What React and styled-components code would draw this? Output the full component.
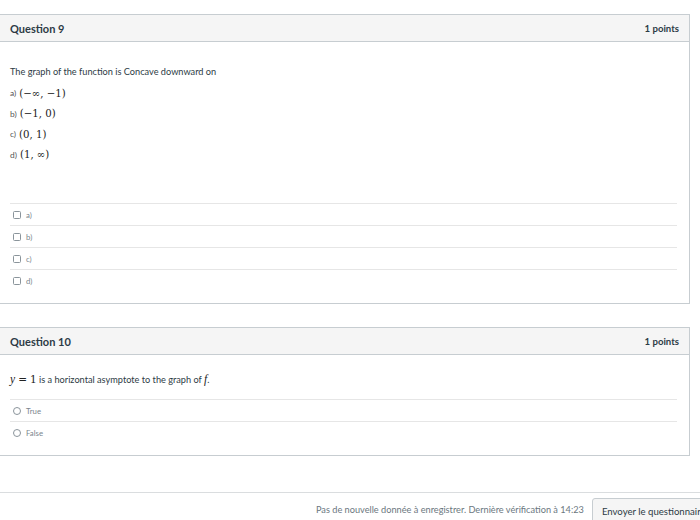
import React from "react";
import styled, { createGlobalStyle } from "styled-components";

const GlobalStyle = createGlobalStyle`
  html, body {
    margin: 0;
    padding: 0;
    background: #ffffff;
    overflow: hidden;
  }
  body {
    font-family: Lato, "Open Sans", "Liberation Sans", sans-serif;
    color: #2d3b45;
  }
`;

const St = {
  Page: styled.div`
    width: 700px;
    height: 520px;
    padding-top: 14px;
    box-sizing: border-box;
    overflow: hidden;
  `,

  Card: styled.div`
    width: 690px;
    box-sizing: border-box;
    border: 1px solid #c7cdd1;
    border-left: none;
    margin-bottom: ${({ mb }) => mb || "0"};
    background: #ffffff;
  `,

  Header: styled.div`
    display: flex;
    align-items: center;
    justify-content: space-between;
    height: 26px;
    padding: 0 10px;
    background: #f5f5f5;
    border-bottom: 1px solid #c7cdd1;
  `,

  Title: styled.span`
    font-size: 11px;
    font-weight: 700;
    color: #2d3b45;
  `,

  Points: styled.span`
    font-size: 9.6px;
    font-weight: 700;
    color: #2d3b45;
  `,

  Body: styled.div`
    padding: ${({ pt }) => pt} 12px ${({ pb }) => pb} 10px;
  `,

  Text: styled.p`
    margin: 0 0 ${({ mb }) => mb || "0"};
    font-size: 9.2px;
    line-height: 14px;
    color: #2d3b45;
  `,

  Option: styled.div`
    display: flex;
    align-items: center;
    gap: 3px;
    height: 20.5px;
  `,

  OptionLabel: styled.span`
    font-size: 8.4px;
    color: #555;
  `,

  Math: styled.span`
    font-family: "DejaVu Serif", "Liberation Serif", serif;
    font-size: ${({ size }) => size || "11px"};
    color: #222;
    white-space: nowrap;
  `,

  Var: styled.i`
    font-family: "Liberation Serif", "DejaVu Serif", serif;
    font-style: italic;
    font-size: 1.1em;
  `,

  Rel: styled.span`
    margin: 0 3px;
  `,

  Answers: styled.div`
    margin-top: ${({ mt }) => mt};
  `,

  Answer: styled.label`
    display: flex;
    align-items: center;
    gap: 5px;
    height: 21px;
    padding-left: 3px;
    border-top: 1px solid #e6e6e6;
  `,

  Box: styled.span`
    display: inline-block;
    width: 6px;
    height: 6px;
    border: 1px solid #8a949b;
    border-radius: ${({ round }) => (round ? "50%" : "1.5px")};
  `,

  AnswerText: styled.span`
    font-size: 7.8px;
    color: #7b868d;
  `,

  Footer: styled.div`
    display: flex;
    align-items: flex-start;
    gap: 8px;
    margin-top: 36px;
    padding: 5px 0 0 316px;
    border-top: 1px solid #dadddf;
    white-space: nowrap;
  `,

  Status: styled.span`
    margin-top: 6px;
    font-size: 9.2px;
    color: #6b7780;
  `,

  SubmitButton: styled.button`
    flex-shrink: 0;
    height: 26px;
    padding: 0 9px;
    background: #f5f5f5;
    border: 1px solid #c7cdd1;
    border-radius: 3px;
    font-family: Lato, "Open Sans", sans-serif;
    font-size: 9.6px;
    color: #2d3b45;
  `,
};

const choices = [
  { key: "a)", math: "(−∞, −1)" },
  { key: "b)", math: "(−1, 0)" },
  { key: "c)", math: "(0, 1)" },
  { key: "d)", math: "(1, ∞)" },
];

const App = () => (
  <St.Page>
    <GlobalStyle />
    <St.Card mb="23px">
      <St.Header>
        <St.Title>Question 9</St.Title>
        <St.Points>1 points</St.Points>
      </St.Header>
      <St.Body pt="23px" pb="12px">
        <St.Text mb="4px">The graph of the function is Concave downward on</St.Text>
        {choices.map((c) => (
          <St.Option key={c.key}>
            <St.OptionLabel>{c.key}</St.OptionLabel>
            <St.Math size="10.2px">{c.math}</St.Math>
          </St.Option>
        ))}
        <St.Answers mt="38px">
          {choices.map((c) => (
            <St.Answer key={c.key}>
              <St.Box />
              <St.AnswerText>{c.key}</St.AnswerText>
            </St.Answer>
          ))}
        </St.Answers>
      </St.Body>
    </St.Card>

    <St.Card>
      <St.Header>
        <St.Title>Question 10</St.Title>
        <St.Points>1 points</St.Points>
      </St.Header>
      <St.Body pt="17px" pb="12px">
        <St.Text>
          <St.Math size="10.5px">
            <St.Var>y</St.Var>
            <St.Rel>=</St.Rel>1
          </St.Math>{" "}
          is a horizontal asymptote to the graph of{" "}
          <St.Math size="10.5px">
            <St.Var>f</St.Var>
          </St.Math>
          .
        </St.Text>
        <St.Answers mt="12px">
          <St.Answer>
            <St.Box round />
            <St.AnswerText>True</St.AnswerText>
          </St.Answer>
          <St.Answer>
            <St.Box round />
            <St.AnswerText>False</St.AnswerText>
          </St.Answer>
        </St.Answers>
      </St.Body>
    </St.Card>

    <St.Footer>
      <St.Status>
        Pas de nouvelle donnée à enregistrer. Dernière vérification à 14:23
      </St.Status>
      <St.SubmitButton>Envoyer le questionnaire</St.SubmitButton>
    </St.Footer>
  </St.Page>
);

export default App;
